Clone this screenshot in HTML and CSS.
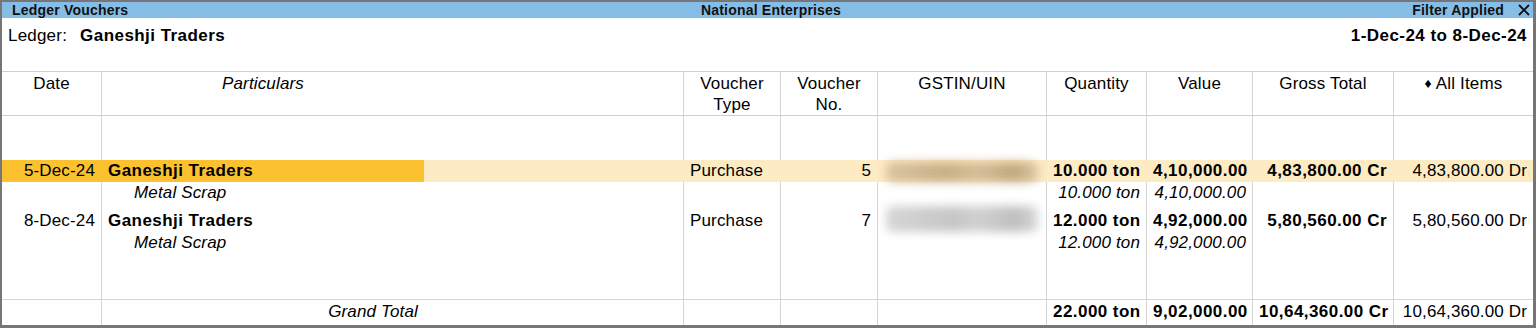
FILE: index.html
```html
<!DOCTYPE html>
<html lang="en">
<head>
    <meta charset="UTF-8">
    <title>Ledger Vouchers</title>
    <link rel="stylesheet" href="styles.css">
</head>
<body>
    <div class="window">
        <div class="titlebar">
            <div class="title-left">Ledger Vouchers</div>
            <div class="title-mid">National Enterprises</div>
            <div class="title-right">
                Filter Applied
                <svg class="close" width="12" height="12" viewBox="0 0 12 12">
                    <path d="M1 1 L11 11 M11 1 L1 11" stroke="#111" stroke-width="1.8" fill="none"/>
                </svg>
            </div>
        </div>

        <div class="ledger-bar">
            <div><span class="label">Ledger:</span><b>Ganeshji Traders</b></div>
            <b>1-Dec-24 to 8-Dec-24</b>
        </div>

        <!-- column headings -->
        <div class="row head">
            <div class="c center">Date</div>
            <div class="c center"><i>Particulars</i></div>
            <div class="c nb"></div>
            <div class="c center">Voucher<br>Type</div>
            <div class="c center">Voucher<br>No.</div>
            <div class="c center">GSTIN/UIN</div>
            <div class="c center">Quantity</div>
            <div class="c center">Value</div>
            <div class="c center">Gross Total</div>
            <div class="c center"><span class="diamond">&#9830;</span> All Items</div>
        </div>

        <div class="body">
            <div class="row spacer">
                <div class="c"></div><div class="c"></div><div class="c nb"></div><div class="c"></div><div class="c"></div>
                <div class="c"></div><div class="c"></div><div class="c"></div><div class="c"></div><div class="c"></div>
            </div>

            <!-- voucher 1 (selected) -->
            <div class="row line sel">
                <div class="c right hi">5-Dec-24</div>
                <div class="c hi"><b>Ganeshji Traders</b></div>
                <div class="c nb"></div>
                <div class="c">Purchase</div>
                <div class="c right">5</div>
                <div class="c"><div class="blur tan"></div></div>
                <div class="c right"><b>10.000 ton</b></div>
                <div class="c right"><b>4,10,000.00</b></div>
                <div class="c right"><b>4,83,800.00 Cr</b></div>
                <div class="c right">4,83,800.00 Dr</div>
            </div>
            <div class="row line">
                <div class="c"></div>
                <div class="c item"><i>Metal Scrap</i></div>
                <div class="c nb"></div>
                <div class="c"></div>
                <div class="c"></div>
                <div class="c"></div>
                <div class="c right"><i>10.000 ton</i></div>
                <div class="c right"><i>4,10,000.00</i></div>
                <div class="c"></div>
                <div class="c"></div>
            </div>
            <div class="row gap">
                <div class="c"></div><div class="c"></div><div class="c nb"></div><div class="c"></div><div class="c"></div>
                <div class="c"></div><div class="c"></div><div class="c"></div><div class="c"></div><div class="c"></div>
            </div>

            <!-- voucher 2 -->
            <div class="row line">
                <div class="c right">8-Dec-24</div>
                <div class="c"><b>Ganeshji Traders</b></div>
                <div class="c nb"></div>
                <div class="c">Purchase</div>
                <div class="c right">7</div>
                <div class="c"><div class="blur grey"></div></div>
                <div class="c right"><b>12.000 ton</b></div>
                <div class="c right"><b>4,92,000.00</b></div>
                <div class="c right"><b>5,80,560.00 Cr</b></div>
                <div class="c right">5,80,560.00 Dr</div>
            </div>
            <div class="row line">
                <div class="c"></div>
                <div class="c item"><i>Metal Scrap</i></div>
                <div class="c nb"></div>
                <div class="c"></div>
                <div class="c"></div>
                <div class="c"></div>
                <div class="c right"><i>12.000 ton</i></div>
                <div class="c right"><i>4,92,000.00</i></div>
                <div class="c"></div>
                <div class="c"></div>
            </div>

            <div class="row filler">
                <div class="c"></div><div class="c"></div><div class="c nb"></div><div class="c"></div><div class="c"></div>
                <div class="c"></div><div class="c"></div><div class="c"></div><div class="c"></div><div class="c"></div>
            </div>

            <div class="row total">
                <div class="c"></div>
                <div class="c right"><i>Grand Total</i></div>
                <div class="c nb"></div>
                <div class="c"></div>
                <div class="c"></div>
                <div class="c"></div>
                <div class="c right"><b>22.000 ton</b></div>
                <div class="c right"><b>9,02,000.00</b></div>
                <div class="c right"><b>10,64,360.00 Cr</b></div>
                <div class="c right">10,64,360.00 Dr</div>
            </div>
        </div>
    </div>
</body>
</html>
```

FILE: styles.css
```css
* {
    margin: 0;
    padding: 0;
    box-sizing: border-box;
}

body {
    font-family: 'Liberation Sans', Arial, sans-serif;
    color: #000;
    background: #fff;
}

b {
    letter-spacing: 0.45px;
}

.window {
    width: 1536px;
    height: 328px;
    border-style: solid;
    border-color: #767676;
    border-width: 2px 3px 3px 2px;
    display: flex;
    flex-direction: column;
}

.titlebar {
    height: 16px;
    background-color: #86bde7;
    display: grid;
    grid-template-columns: 1fr auto 1fr;
    align-items: center;
    font-size: 14px;
    font-weight: bold;
    letter-spacing: 0.2px;
    line-height: 16px;
    color: #111;
    padding: 0 3px 0 10px;
}

.title-right {
    display: flex;
    justify-content: flex-end;
    align-items: center;
    gap: 14px;
}

.ledger-bar {
    height: 54px;
    border-bottom: 1px solid #cfcfcf;
    display: flex;
    justify-content: space-between;
    align-items: flex-start;
    padding: 7px 6px 0 6px;
    font-size: 17px;
    line-height: 22px;
}

.ledger-bar .label {
    margin-right: 13px;
    letter-spacing: 0.2px;
}

.row {
    display: grid;
    grid-template-columns: 99px 323px 259px 97px 97px 169px 100px 106px 141px 140px;
    font-size: 17px;
    line-height: 22px;
    letter-spacing: 0.15px;
}

.c {
    border-left: 1px solid #d5d5d5;
    padding: 0 6px;
    white-space: nowrap;
}

.c:first-child,
.c.nb {
    border-left: none;
}

.center { text-align: center; }
.right { text-align: right; }

.head {
    height: 44px;
    border-bottom: 1px solid #cfcfcf;
    line-height: 21px;
}

.head .c {
    padding-top: 1px;
}

.diamond {
    font-size: 14px;
    vertical-align: 1px;
}

.body {
    flex: 1;
    display: flex;
    flex-direction: column;
}

.spacer { height: 44px; }
.line { height: 22px; }
.gap { height: 6px; }
.filler { flex: 1; }

.total {
    height: 26px;
    border-top: 1px solid #d5d5d5;
    line-height: 24px;
}

.item {
    padding-left: 32px;
}

/* selected voucher line */
.sel .c {
    background-color: #fdebc3;
    border-left-color: transparent;
}

.sel .c.hi {
    background-color: #fcc12f;
}

/* masked GSTIN */
.blur {
    height: 20px;
    margin: 2px 0 0 2px;
    width: 152px;
    border-radius: 6px;
    filter: blur(5px);
}

.blur.tan {
    background: linear-gradient(90deg, #d8c3a0, #c9ae86 40%, #d4bd98 60%, #c2a67e 85%, #dac7a8);
}

.blur.grey {
    height: 26px;
    margin-top: -4px;
    background: linear-gradient(90deg, #d6d6d6, #c6c6c6 45%, #d1d1d1 60%, #bfbfbf 85%, #d9d9d9);
}
```
